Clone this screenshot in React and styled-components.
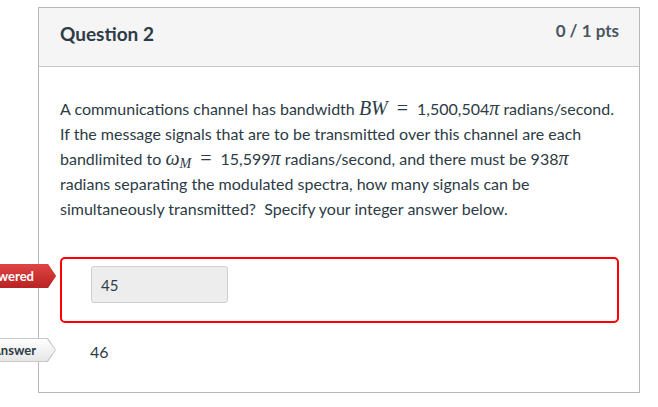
import styled, { createGlobalStyle } from "styled-components"

const GlobalStyle = createGlobalStyle`
  html, body {
    margin: 0;
    padding: 0;
    background: #ffffff;
  }
  body {
    font-family: Lato, "Liberation Sans", sans-serif;
    color: #2d3b45;
    overflow: hidden;
  }
`

const Page = styled.div`
  width: 658px;
  height: 407px;
  padding: 7px 18px 0 38px;
  box-sizing: border-box;
`

const Card = styled.div`
  width: 602px;
  height: 386px;
  box-sizing: border-box;
  border: 1px solid #b8b8b8;
  background: #fff;
`

const Header = styled.div`
  display: flex;
  justify-content: space-between;
  align-items: flex-start;
  height: 59px;
  box-sizing: border-box;
  padding: 13px 20px 0 21px;
  background: #f5f5f5;
  border-bottom: 1px solid #c7c7c7;
`

const Title = styled.h2`
  margin: 0;
  font-size: 19px;
  line-height: 26px;
  font-weight: 700;
  color: #2d3b45;
`

const Points = styled.div`
  font-size: 17px;
  line-height: 20px;
  font-weight: 700;
  color: #4a5660;
`

const Body = styled.div`
  padding: 29px 20px 0 21px;
`

const QuestionText = styled.p`
  margin: 0;
  font-size: 16px;
  line-height: 25px;
  color: #2d3b45;
  white-space: nowrap;
`

const MathVar = styled.span`
  font-family: "Liberation Serif", "DejaVu Serif", serif;
  font-style: ${(p) => (p.$upright ? "normal" : "italic")};
  font-size: ${(p) => (p.$sub ? "14px" : "20px")};
  line-height: 1;
  vertical-align: ${(p) => (p.$sub ? "-3px" : "baseline")};
  margin: ${(p) => p.$space || "0"};
`

const Answers = styled.div`
  margin-top: 36px;
  display: flex;
  flex-direction: column;
`

const AnswerRow = styled.div`
  position: relative;
  box-sizing: border-box;
  display: flex;
  align-items: ${(p) => (p.$boxed ? "flex-start" : "center")};
  height: ${(p) => (p.$boxed ? "66px" : "auto")};
  border: ${(p) => (p.$boxed ? "2px solid #ff0000" : "2px solid transparent")};
  border-radius: 5px;
  padding: ${(p) => (p.$boxed ? "7px 0 0 29px" : "2px 0 0 28px")};
  margin-top: ${(p) => (p.$boxed ? "0" : "13px")};
`

const Tag = styled.div`
  position: absolute;
  top: ${(p) => p.$top}px;
  left: -128px;
  width: 122px;
  height: 24px;
  clip-path: polygon(0 0, 114px 0, 122px 50%, 114px 100%, 0 100%);
  background: ${(p) => (p.$wrong ? "#c62a2a" : "#c4c9cd")};
`

const TagInner = styled.div`
  position: absolute;
  inset: ${(p) => (p.$wrong ? "0" : "1px")};
  clip-path: polygon(0 0, calc(100% - 8px) 0, 100% 50%, calc(100% - 8px) 100%, 0 100%);
  background: ${(p) =>
    p.$wrong
      ? "linear-gradient(#e04545, #b82323)"
      : "linear-gradient(#ffffff, #e6e6e6)"};
  color: ${(p) => (p.$wrong ? "#ffffff" : "#2d3b45")};
  font-size: 13px;
  font-weight: 700;
  display: flex;
  align-items: center;
  justify-content: flex-end;
  padding-right: ${(p) => (p.$wrong ? "22px" : "19px")};
  box-sizing: border-box;
  white-space: nowrap;
`

const InputBox = styled.div`
  width: 137px;
  height: 37px;
  box-sizing: border-box;
  background: #ededed;
  border: 1px solid #cfcfcf;
  border-radius: 3px;
  padding: 0 9px;
  display: flex;
  align-items: center;
  font-size: 15px;
  color: #2d3b45;
`

const PlainAnswer = styled.div`
  font-size: 16px;
  line-height: 24px;
  color: #2d3b45;
`

export default function App() {
  return (
    <>
      <GlobalStyle />
      <Page>
        <Card>
          <Header>
            <Title>Question 2</Title>
            <Points>0 / 1 pts</Points>
          </Header>
          <Body>
            <QuestionText>
              A communications channel has bandwidth{" "}
              <MathVar>BW</MathVar>
              <MathVar $upright $space="0 9px">=</MathVar>
              1,500,504<MathVar>π</MathVar> radians/second.
              <br />
              If the message signals that are to be transmitted over this
              channel are each
              <br />
              bandlimited to <MathVar>ω</MathVar>
              <MathVar $sub>M</MathVar>
              <MathVar $upright $space="0 9px">=</MathVar>
              15,599<MathVar>π</MathVar> radians/second, and there must be 938
              <MathVar>π</MathVar>
              <br />
              radians separating the modulated spectra, how many signals can be
              <br />
              simultaneously transmitted?&nbsp; Specify your integer answer
              below.
            </QuestionText>
            <Answers>
              <AnswerRow $boxed>
                <Tag $wrong $top={5}>
                  <TagInner $wrong>You Answered</TagInner>
                </Tag>
                <InputBox>45</InputBox>
              </AnswerRow>
              <AnswerRow>
                <Tag $top={0}>
                  <TagInner>Correct Answer</TagInner>
                </Tag>
                <PlainAnswer>46</PlainAnswer>
              </AnswerRow>
            </Answers>
          </Body>
        </Card>
      </Page>
    </>
  )
}
